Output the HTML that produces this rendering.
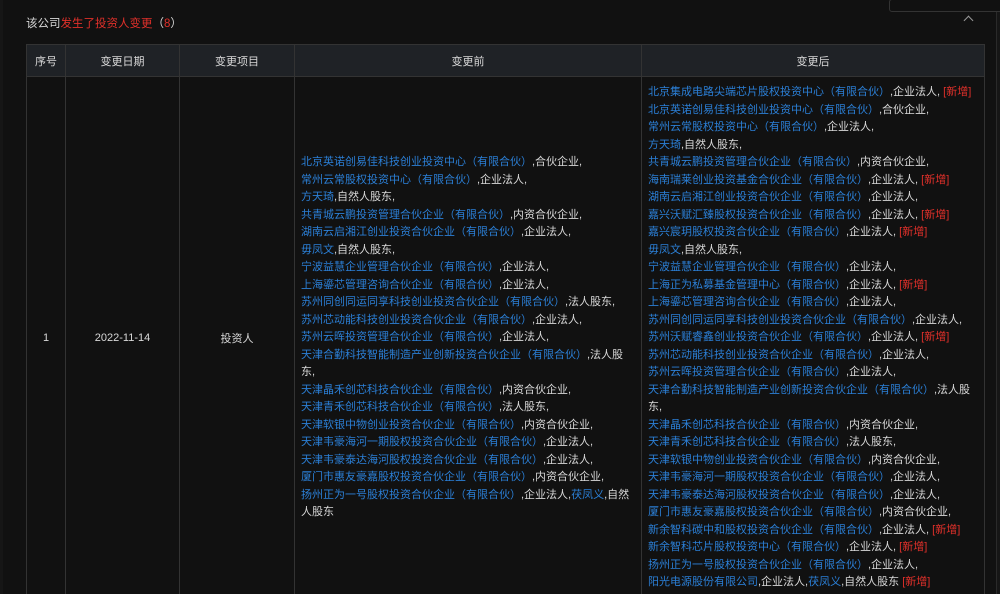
<!DOCTYPE html>
<html><head><meta charset="utf-8"><style>
*{margin:0;padding:0;box-sizing:border-box}
html,body{width:1000px;height:594px;overflow:hidden;background:#161616}
body{font-family:"Liberation Sans","Noto Sans CJK SC",sans-serif;font-size:11px;color:#d8d8d8;position:relative}
.panel{position:absolute;left:3px;top:0;width:994px;height:594px;background:#111;border-right:1px solid #2a2a2a}
.topbox{position:absolute;left:889px;top:-1px;width:120px;height:13px;border:1px solid #333;border-radius:3px;background:#111}
.title{position:absolute;left:26px;top:15px;font-size:11.5px;color:#d8d8d8}
.title .r{color:#e0302a}
.chev{position:absolute;left:965px;top:17px;width:7px;height:7px;border-left:1.5px solid #999;border-top:1.5px solid #999;transform:rotate(45deg)}
table{position:absolute;left:26px;top:44px;width:958px;border-collapse:collapse;table-layout:fixed}
th,td{border:1px solid #333;text-align:center;vertical-align:middle}
th{background:#1f2226;height:32px;font-weight:normal;color:#d8d8d8;font-size:11px}
td{height:520px;}
td.l{text-align:left;padding:7px 6px 8px 6px;line-height:17.5px}
.b{color:#2b7fd6}
.n{color:#e0302a}
</style></head><body>
<div class="panel"></div>
<div class="topbox"></div>
<div class="title">该公司<span class="r">发生了投资人变更</span>（<span class="r">8</span>）</div>
<div class="chev"></div>
<table>
<colgroup><col style="width:39px"><col style="width:114px"><col style="width:115px"><col style="width:347px"><col style="width:343px"></colgroup>
<tr><th>序号</th><th>变更日期</th><th>变更项目</th><th>变更前</th><th>变更后</th></tr>
<tr><td>1</td><td>2022-11-14</td><td>投资人</td>
<td class="l">
<span class="b">北京英诺创易佳科技创业投资中心（有限合伙）</span>,合伙企业,<br>
<span class="b">常州云常股权投资中心（有限合伙）</span>,企业法人,<br>
<span class="b">方天琦</span>,自然人股东,<br>
<span class="b">共青城云鹏投资管理合伙企业（有限合伙）</span>,内资合伙企业,<br>
<span class="b">湖南云启湘江创业投资合伙企业（有限合伙）</span>,企业法人,<br>
<span class="b">毋凤文</span>,自然人股东,<br>
<span class="b">宁波益慧企业管理合伙企业（有限合伙）</span>,企业法人,<br>
<span class="b">上海鎏芯管理咨询合伙企业（有限合伙）</span>,企业法人,<br>
<span class="b">苏州同创同运同享科技创业投资合伙企业（有限合伙）</span>,法人股东,<br>
<span class="b">苏州芯动能科技创业投资合伙企业（有限合伙）</span>,企业法人,<br>
<span class="b">苏州云晖投资管理合伙企业（有限合伙）</span>,企业法人,<br>
<span class="b">天津合勤科技智能制造产业创新投资合伙企业（有限合伙）</span>,法人股东,<br>
<span class="b">天津晶禾创芯科技合伙企业（有限合伙）</span>,内资合伙企业,<br>
<span class="b">天津青禾创芯科技合伙企业（有限合伙）</span>,法人股东,<br>
<span class="b">天津软银中物创业投资合伙企业（有限合伙）</span>,内资合伙企业,<br>
<span class="b">天津韦豪海河一期股权投资合伙企业（有限合伙）</span>,企业法人,<br>
<span class="b">天津韦豪泰达海河股权投资合伙企业（有限合伙）</span>,企业法人,<br>
<span class="b">厦门市惠友豪嘉股权投资合伙企业（有限合伙）</span>,内资合伙企业,<br>
<span class="b">扬州正为一号股权投资合伙企业（有限合伙）</span>,企业法人,<span class="b">茯凤义</span>,自然人股东
</td>
<td class="l">
<span class="b">北京集成电路尖端芯片股权投资中心（有限合伙）</span>,企业法人, <span class="n">[新增]</span><br>
<span class="b">北京英诺创易佳科技创业投资中心（有限合伙）</span>,合伙企业,<br>
<span class="b">常州云常股权投资中心（有限合伙）</span>,企业法人,<br>
<span class="b">方天琦</span>,自然人股东,<br>
<span class="b">共青城云鹏投资管理合伙企业（有限合伙）</span>,内资合伙企业,<br>
<span class="b">海南瑞莱创业投资基金合伙企业（有限合伙）</span>,企业法人, <span class="n">[新增]</span><br>
<span class="b">湖南云启湘江创业投资合伙企业（有限合伙）</span>,企业法人,<br>
<span class="b">嘉兴沃赋汇臻股权投资合伙企业（有限合伙）</span>,企业法人, <span class="n">[新增]</span><br>
<span class="b">嘉兴宸玥股权投资合伙企业（有限合伙）</span>,企业法人, <span class="n">[新增]</span><br>
<span class="b">毋凤文</span>,自然人股东,<br>
<span class="b">宁波益慧企业管理合伙企业（有限合伙）</span>,企业法人,<br>
<span class="b">上海正为私募基金管理中心（有限合伙）</span>,企业法人, <span class="n">[新增]</span><br>
<span class="b">上海鎏芯管理咨询合伙企业（有限合伙）</span>,企业法人,<br>
<span class="b">苏州同创同运同享科技创业投资合伙企业（有限合伙）</span>,企业法人,<br>
<span class="b">苏州沃赋睿鑫创业投资合伙企业（有限合伙）</span>,企业法人, <span class="n">[新增]</span><br>
<span class="b">苏州芯动能科技创业投资合伙企业（有限合伙）</span>,企业法人,<br>
<span class="b">苏州云晖投资管理合伙企业（有限合伙）</span>,企业法人,<br>
<span class="b">天津合勤科技智能制造产业创新投资合伙企业（有限合伙）</span>,法人股东,<br>
<span class="b">天津晶禾创芯科技合伙企业（有限合伙）</span>,内资合伙企业,<br>
<span class="b">天津青禾创芯科技合伙企业（有限合伙）</span>,法人股东,<br>
<span class="b">天津软银中物创业投资合伙企业（有限合伙）</span>,内资合伙企业,<br>
<span class="b">天津韦豪海河一期股权投资合伙企业（有限合伙）</span>,企业法人,<br>
<span class="b">天津韦豪泰达海河股权投资合伙企业（有限合伙）</span>,企业法人,<br>
<span class="b">厦门市惠友豪嘉股权投资合伙企业（有限合伙）</span>,内资合伙企业,<br>
<span class="b">新余智科碳中和股权投资合伙企业（有限合伙）</span>,企业法人, <span class="n">[新增]</span><br>
<span class="b">新余智科芯片股权投资中心（有限合伙）</span>,企业法人, <span class="n">[新增]</span><br>
<span class="b">扬州正为一号股权投资合伙企业（有限合伙）</span>,企业法人,<br>
<span class="b">阳光电源股份有限公司</span>,企业法人,<span class="b">茯凤义</span>,自然人股东 <span class="n">[新增]</span>
</td></tr>
</table>
</body></html>
